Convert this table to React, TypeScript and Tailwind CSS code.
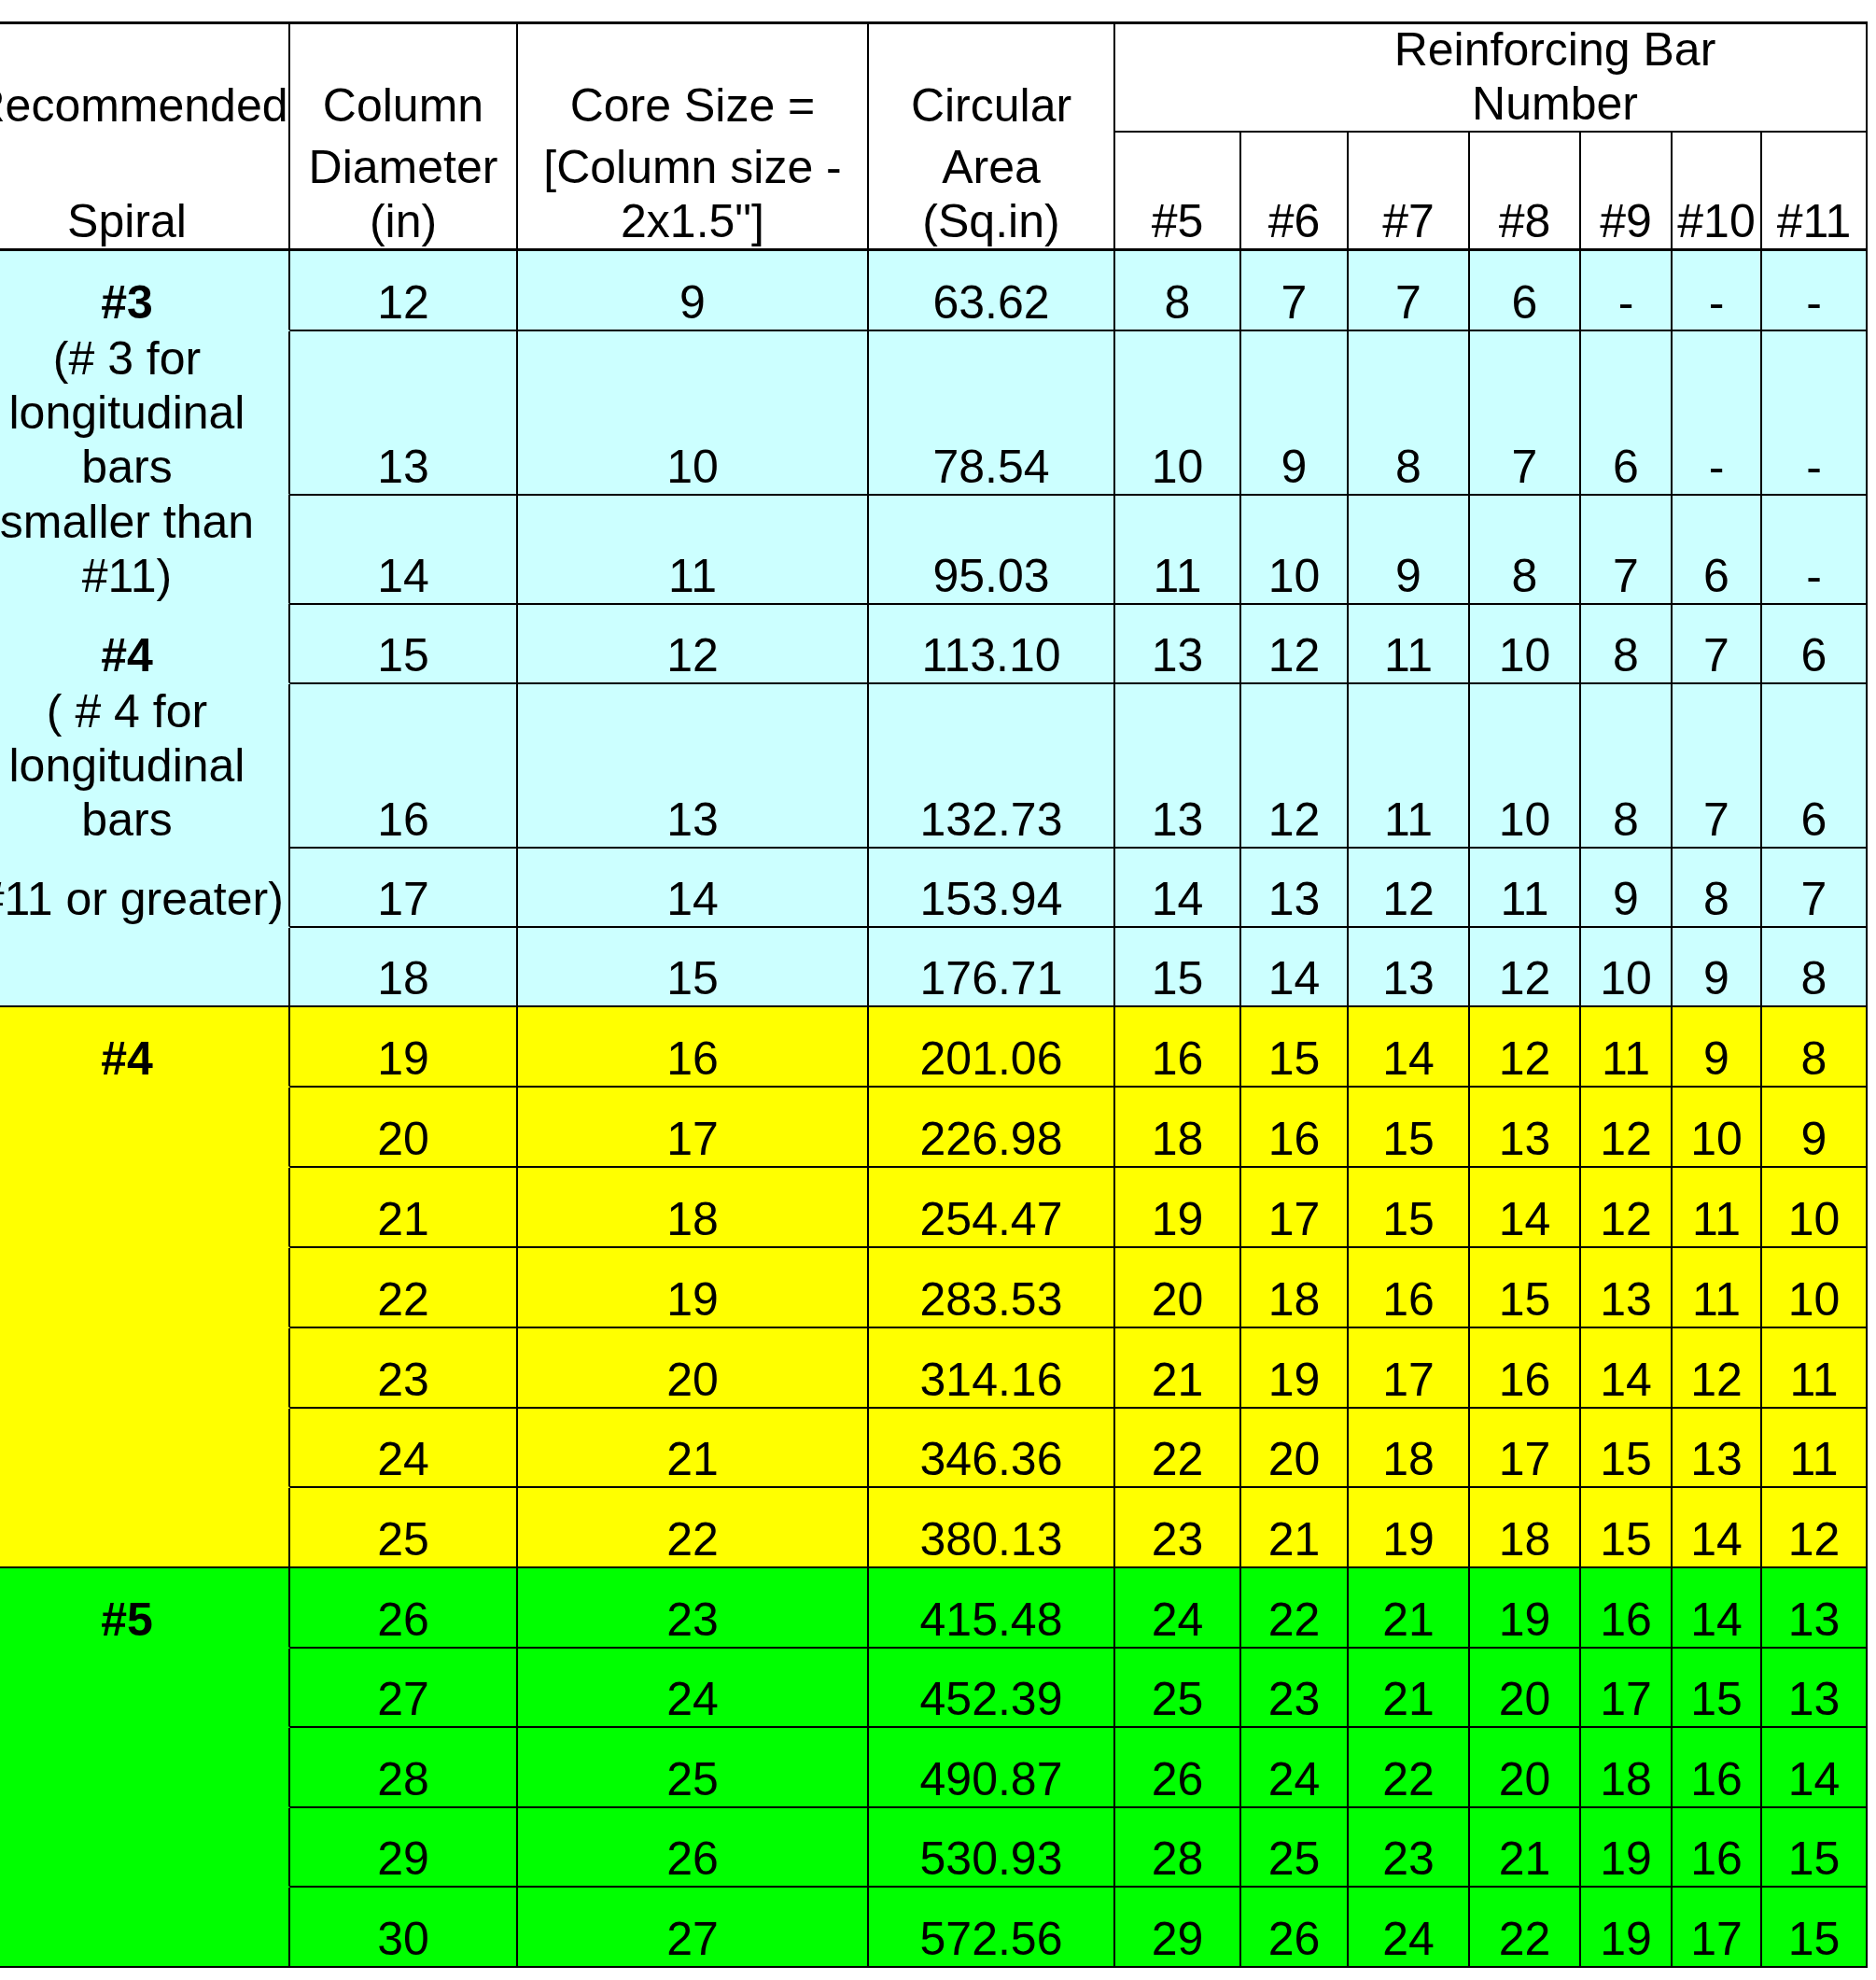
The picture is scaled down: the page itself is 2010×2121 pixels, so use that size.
type Line = { text: string; bold?: boolean; nudge?: string };

type Row = {
  d: string;
  core: string;
  area: string;
  bars: string[];
  height: string;
  bg: string;
  first: Line[];
  groupEnd?: boolean;
};

const cols =
  'grid grid-cols-[348px_244px_376px_264px_135px_115px_130px_119px_98px_96px_113px]';

const cyan = 'bg-[#ccffff]';
const yellow = 'bg-[#ffff00]';
const green = 'bg-[#00ff00]';

const rows: Row[] = [
  { d: '12', core: '9', area: '63.62', bars: ['8', '7', '7', '6', '-', '-', '-'], height: 'h-[86px]', bg: cyan, first: [{ text: '#3', bold: true }] },
  { d: '13', core: '10', area: '78.54', bars: ['10', '9', '8', '7', '6', '-', '-'], height: 'h-[175px]', bg: cyan, first: [{ text: '(# 3 for' }, { text: 'longitudinal' }, { text: 'bars' }] },
  { d: '14', core: '11', area: '95.03', bars: ['11', '10', '9', '8', '7', '6', '-'], height: 'h-[117px]', bg: cyan, first: [{ text: 'smaller than' }, { text: '#11)' }] },
  { d: '15', core: '12', area: '113.10', bars: ['13', '12', '11', '10', '8', '7', '6'], height: 'h-[86px]', bg: cyan, first: [{ text: '#4', bold: true }] },
  { d: '16', core: '13', area: '132.73', bars: ['13', '12', '11', '10', '8', '7', '6'], height: 'h-[174px]', bg: cyan, first: [{ text: '( # 4 for' }, { text: 'longitudinal' }, { text: 'bars' }] },
  { d: '17', core: '14', area: '153.94', bars: ['14', '13', '12', '11', '9', '8', '7'], height: 'h-[87px]', bg: cyan, first: [{ text: '(#11 or greater)', nudge: 'mr-[8px]' }] },
  { d: '18', core: '15', area: '176.71', bars: ['15', '14', '13', '12', '10', '9', '8'], height: 'h-[85px]', bg: cyan, first: [], groupEnd: true },
  { d: '19', core: '16', area: '201.06', bars: ['16', '15', '14', '12', '11', '9', '8'], height: 'h-[86px]', bg: yellow, first: [{ text: '#4', bold: true }] },
  { d: '20', core: '17', area: '226.98', bars: ['18', '16', '15', '13', '12', '10', '9'], height: 'h-[86px]', bg: yellow, first: [] },
  { d: '21', core: '18', area: '254.47', bars: ['19', '17', '15', '14', '12', '11', '10'], height: 'h-[86px]', bg: yellow, first: [] },
  { d: '22', core: '19', area: '283.53', bars: ['20', '18', '16', '15', '13', '11', '10'], height: 'h-[86px]', bg: yellow, first: [] },
  { d: '23', core: '20', area: '314.16', bars: ['21', '19', '17', '16', '14', '12', '11'], height: 'h-[86px]', bg: yellow, first: [] },
  { d: '24', core: '21', area: '346.36', bars: ['22', '20', '18', '17', '15', '13', '11'], height: 'h-[85px]', bg: yellow, first: [] },
  { d: '25', core: '22', area: '380.13', bars: ['23', '21', '19', '18', '15', '14', '12'], height: 'h-[86px]', bg: yellow, first: [], groupEnd: true },
  { d: '26', core: '23', area: '415.48', bars: ['24', '22', '21', '19', '16', '14', '13'], height: 'h-[86px]', bg: green, first: [{ text: '#5', bold: true }] },
  { d: '27', core: '24', area: '452.39', bars: ['25', '23', '21', '20', '17', '15', '13'], height: 'h-[85px]', bg: green, first: [] },
  { d: '28', core: '25', area: '490.87', bars: ['26', '24', '22', '20', '18', '16', '14'], height: 'h-[86px]', bg: green, first: [] },
  { d: '29', core: '26', area: '530.93', bars: ['28', '25', '23', '21', '19', '16', '15'], height: 'h-[85px]', bg: green, first: [] },
  { d: '30', core: '27', area: '572.56', bars: ['29', '26', '24', '22', '19', '17', '15'], height: 'h-[86px]', bg: green, first: [], groupEnd: true },
];

const cell = 'flex flex-col items-center justify-end border-r-2 border-black';

function Lines({ lines }: { lines: Line[] }) {
  return (
    <>
      {lines.map((l, i) => (
        <div key={i} className={`${l.bold ? 'font-bold' : ''} ${l.nudge ?? ''}`}>
          {l.text}
        </div>
      ))}
    </>
  );
}

function Header() {
  return (
    <div className={`${cols} grid-rows-[116px_127px] bg-white`}>
      <div className={`${cell} pl-[6px]`}>Recommended</div>
      <div className={cell}>Column</div>
      <div className={cell}>Core Size =</div>
      <div className={cell}>Circular</div>
      <div className={`${cell} col-span-7 border-b-2 pl-[138px]`}>
        <div>Reinforcing Bar</div>
        <div>Number</div>
      </div>

      <div className={`${cell} border-b-[3px]`}>Spiral</div>
      <div className={`${cell} border-b-[3px]`}>
        <div>Diameter</div>
        <div>(in)</div>
      </div>
      <div className={`${cell} border-b-[3px]`}>
        <div>[Column size -</div>
        <div>2x1.5"]</div>
      </div>
      <div className={`${cell} border-b-[3px]`}>
        <div>Area</div>
        <div>(Sq.in)</div>
      </div>
      {['#5', '#6', '#7', '#8', '#9', '#10', '#11'].map((b) => (
        <div key={b} className={`${cell} border-b-[3px]`}>
          {b}
        </div>
      ))}
    </div>
  );
}

function DataRow({ row }: { row: Row }) {
  const firstBorder = row.groupEnd
    ? 'border-b-2'
    : 'border-b-2 border-b-transparent';
  return (
    <div className={`${cols} ${row.height} ${row.bg}`}>
      <div className={`${cell} ${firstBorder}`}>
        <Lines lines={row.first} />
      </div>
      {[row.d, row.core, row.area, ...row.bars].map((v, i) => (
        <div key={i} className={`${cell} border-b-2`}>
          {v}
        </div>
      ))}
    </div>
  );
}

export default function App() {
  return (
    <div className="min-h-[2121px] w-full overflow-hidden bg-white">
      <div className="ml-[-37px] mt-[23px] w-[2038px] border-t-[3px] border-black font-['Liberation_Sans',Arial,sans-serif] text-[50px] leading-[58px] whitespace-nowrap text-black">
        <Header />
        {rows.map((r) => (
          <DataRow key={r.d} row={r} />
        ))}
      </div>
    </div>
  );
}
